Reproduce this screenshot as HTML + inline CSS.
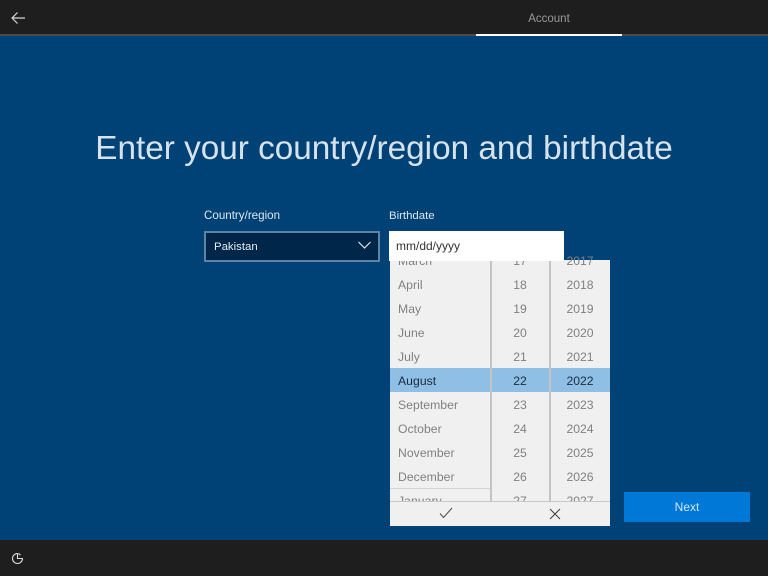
<!DOCTYPE html>
<html><head><meta charset="utf-8"><style>
html,body{margin:0;padding:0}
body{width:768px;height:576px;position:relative;overflow:hidden;background:#004275;font-family:"Liberation Sans",sans-serif}
div{position:absolute;white-space:nowrap}
.m{left:398px;font-size:12.2px;letter-spacing:.05px;color:#808080;line-height:24px;height:24px}
.d{left:491px;width:58px;text-align:center;font-size:12.2px;color:#808080;line-height:24px;height:24px}
.y{left:551px;width:58px;text-align:center;font-size:12.2px;color:#808080;line-height:24px;height:24px}
.s{color:#1a2a3a}
</style></head><body>
<div style="left:0;top:0;width:768px;height:35px;background:#1e1e1e"></div>
<div style="left:0;top:34px;width:768px;height:2px;background:#4a4a4a"></div>
<div style="left:476px;top:34px;width:146px;height:2px;background:#fff"></div>
<svg style="position:absolute;left:10px;top:10px" width="16" height="16" viewBox="0 0 16 16"><path d="M15 8H2M7.500 2.500L2 8l5.500 5.500" fill="none" stroke="#d8d8d8" stroke-width="1.200"/></svg>
<div style="left:476px;width:146px;top:12px;text-align:center;font-size:11.500px;line-height:15px;color:#9a9a9a">Account</div>
<div style="left:0;width:768px;top:128px;text-align:center;font-size:33.300px;line-height:42px;color:#d6e3ed">Enter your country/region and birthdate</div>
<div style="left:204px;top:208px;font-size:11.600px;line-height:15px;color:#dde7ef">Country/region</div>
<div style="left:389px;top:209px;font-size:11.400px;line-height:15px;color:#dde7ef">Birthdate</div>
<div style="left:204px;top:231px;width:172px;height:27px;background:#00264a;border:2px solid #5f84a3"></div>
<div style="left:214px;top:240px;font-size:11.400px;line-height:15px;color:#e4ebf1">Pakistan</div>
<svg style="position:absolute;left:357px;top:240px" width="15" height="11" viewBox="0 0 15 11"><path d="M1.500 2l6 6 6-6" fill="none" stroke="#dfe7ee" stroke-width="1.200"/></svg>
<div style="left:390px;top:260px;width:220px;height:266px;background:#f0f0f0"></div>
<div class="m" style="top:255px;height:14px;line-height:13px;overflow:hidden">March</div>
<div class="d" style="top:255px;height:14px;line-height:13px;overflow:hidden">17</div>
<div class="y" style="top:255px;height:14px;line-height:13px;overflow:hidden">2017</div>
<div class="m" style="top:273px">April</div><div class="d" style="top:273px">18</div><div class="y" style="top:273px">2018</div>
<div class="m" style="top:297px">May</div><div class="d" style="top:297px">19</div><div class="y" style="top:297px">2019</div>
<div class="m" style="top:321px">June</div><div class="d" style="top:321px">20</div><div class="y" style="top:321px">2020</div>
<div class="m" style="top:345px">July</div><div class="d" style="top:345px">21</div><div class="y" style="top:345px">2021</div>
<div style="left:390px;top:368px;width:220px;height:24px;background:#90bfe6"></div>
<div class="m s" style="top:369px">August</div><div class="d s" style="top:369px">22</div><div class="y s" style="top:369px">2022</div>
<div class="m" style="top:393px">September</div><div class="d" style="top:393px">23</div><div class="y" style="top:393px">2023</div>
<div class="m" style="top:417px">October</div><div class="d" style="top:417px">24</div><div class="y" style="top:417px">2024</div>
<div class="m" style="top:441px">November</div><div class="d" style="top:441px">25</div><div class="y" style="top:441px">2025</div>
<div class="m" style="top:465px">December</div><div class="d" style="top:465px">26</div><div class="y" style="top:465px">2026</div>
<div style="left:390px;top:488px;width:100px;height:1px;background:#d4d4d4"></div>
<div class="m" style="top:489px;overflow:hidden;height:12px;line-height:24px">January</div>
<div class="d" style="top:489px;overflow:hidden;height:12px">27</div>
<div class="y" style="top:489px;overflow:hidden;height:12px">2027</div>
<div style="left:490px;top:260px;width:1.500px;height:241px;background:#c4c4c4"></div>
<div style="left:549px;top:260px;width:1.500px;height:241px;background:#c4c4c4"></div>
<div style="left:390px;top:501px;width:220px;height:25px;background:#f0f0f0;border-top:1px solid #c8c8c8;box-sizing:border-box"></div>
<svg style="position:absolute;left:439px;top:507px" width="14" height="12" viewBox="0 0 14 12"><path d="M1 6.500L4.500 10.500 13 1" fill="none" stroke="#4a4a4a" stroke-width="1"/></svg>
<svg style="position:absolute;left:549px;top:508px" width="12" height="12" viewBox="0 0 12 12"><path d="M1 1l10 10M11 1L1 11" fill="none" stroke="#3c3c3c" stroke-width="1"/></svg>
<div style="left:389px;top:231px;width:175px;height:30px;background:#fff"></div>
<div style="left:396px;top:239px;font-size:12px;line-height:15px;color:#333">mm/dd/yyyy</div>
<div style="left:624px;top:492px;width:126px;height:30px;background:#0078d7;text-align:center;font-size:12px;line-height:30px;color:#cfe6f8">Next</div>
<div style="left:0;top:540px;width:768px;height:36px;background:#1e1e1e"></div>
<svg style="position:absolute;left:11px;top:552px" width="14" height="14" viewBox="0 0 14 14"><path d="M6.500 1.500A5 5 0 1 0 11.500 6.500H6.500ZM7.500 1.500L9.500 3" fill="none" stroke="#dcdcdc" stroke-width="1.100"/></svg>
</body></html>
